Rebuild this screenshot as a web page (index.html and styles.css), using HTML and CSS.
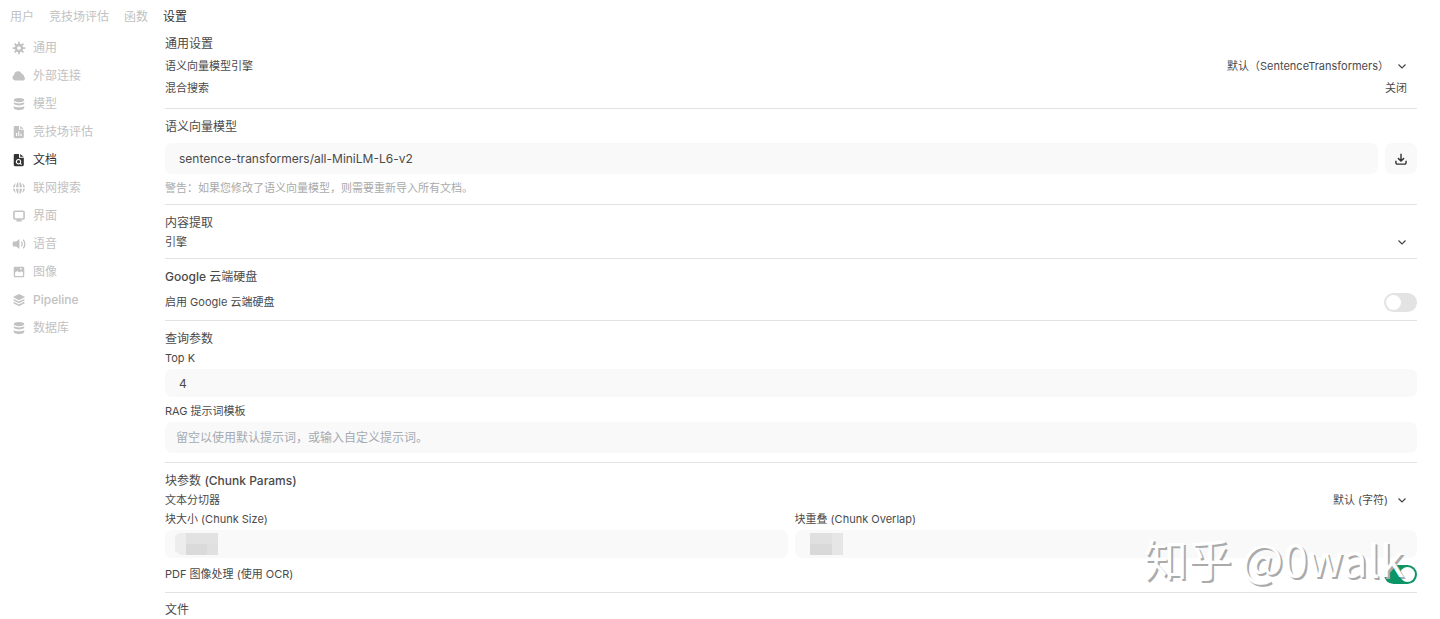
FILE: index.html
```html
<!DOCTYPE html>
<html lang="zh-CN">
<head>
<meta charset="utf-8">
<meta name="viewport" content="width=device-width, initial-scale=1">
<title>设置</title>
<link rel="stylesheet" href="styles.css">
</head>
<body>
<nav class="tabs" aria-label="管理">
  <a href="#users">用户</a>
  <a href="#evaluations">竞技场评估</a>
  <a href="#functions">函数</a>
  <a href="#settings" class="active">设置</a>
</nav>
<div class="layout">
  <nav class="sidebar" aria-label="设置分类">
    <a href="#general"><svg class="icon" viewBox="0 0 16 16"><circle cx="8" cy="8" r="3.5" fill="none" stroke="currentColor" stroke-width="2.8"/><path d="M8 .8v3M8 12.200v3M.8 8h3M12.200 8h3M2.900 2.900l2.200 2.200M10.900 10.900l2.200 2.200M2.900 13.100l2.200-2.200M10.900 5.100l2.200-2.200" stroke="currentColor" stroke-width="2"/></svg>通用</a>
    <a href="#connections"><svg class="icon" viewBox="0 0 16 16"><path d="M4 13.200a3.500 3.500 0 0 1-1.500-6.600 4.500 4.500 0 0 1 8.600-1.300 3.400 3.400 0 0 1 2.700 3.500 2.500 2.500 0 0 1-.6 4.400z"/></svg>外部连接</a>
    <a href="#models"><svg class="icon" viewBox="0 0 16 16"><path d="M8 1c3.300 0 6 1 6 2.500S11.300 6 8 6 2 5 2 3.500 4.700 1 8 1zM2 5.800C3.300 7 5.500 7.400 8 7.400s4.700-.4 6-1.600v1.400c0 1.500-2.700 2.500-6 2.500S2 8.700 2 7.200zM2 10.200c1.300 1.200 3.500 1.600 6 1.600s4.700-.4 6-1.600v2.200C14 14 11.300 15 8 15s-6-1-6-2.600z"/></svg>模型</a>
    <a href="#arena"><svg class="icon" viewBox="0 0 16 16"><path fill-rule="evenodd" d="M3.500 1H8v4.500h5.500v8A1.500 1.500 0 0 1 12 15H3.500A1.500 1.500 0 0 1 2 13.500v-11A1.500 1.500 0 0 1 3.500 1zM9.300 1.100l4 3.200H9.300zM4.500 9v3.500h1.300V9zm2.600-1.500v5h1.300v-5zm2.600 2.500v2.500H11V10z"/></svg>竞技场评估</a>
    <a href="#documents" class="active"><svg class="icon" viewBox="0 0 16 16"><path fill-rule="evenodd" d="M3.500 1H8v4.500h5.500v8A1.500 1.500 0 0 1 12 15H3.500A1.500 1.500 0 0 1 2 13.500v-11A1.500 1.500 0 0 1 3.500 1zM9.300 1.100l4 3.200H9.300zM7.500 6.800a3.100 3.100 0 1 0 1.600 5.700l1.300 1.200.9-.9-1.200-1.300a3.100 3.100 0 0 0-2.600-4.700zm0 1.300a1.800 1.800 0 1 1 0 3.600 1.800 1.800 0 0 1 0-3.600z"/></svg>文档</a>
    <a href="#web"><svg class="icon" viewBox="0 0 16 16"><path d="M7.300 1.200v6H4.700c.1-2.800 1-5 2.600-6zM8.700 1.200v6h2.600c-.1-2.800-1-5-2.600-6zM7.300 14.800v-6H4.700c.1 2.800 1 5 2.600 6zM8.700 14.800v-6h2.600c-.1 2.800-1 5-2.600 6zM4.500 2.200a8 8 0 0 0-1.100 5H1.100a7 7 0 0 1 3.400-5zM4.500 13.800a8 8 0 0 1-1.100-5H1.100a7 7 0 0 0 3.400 5zM11.500 2.200a8 8 0 0 1 1.100 5h2.300a7 7 0 0 0-3.400-5zM11.500 13.800a8 8 0 0 0 1.100-5h2.300a7 7 0 0 1-3.400 5z"/></svg>联网搜索</a>
    <a href="#interface"><svg class="icon" viewBox="0 0 16 16"><path d="M3.500 2.500h9a1.300 1.300 0 0 1 1.300 1.300v6.400a1.300 1.300 0 0 1-1.300 1.300h-9a1.300 1.300 0 0 1-1.300-1.300V3.800a1.300 1.300 0 0 1 1.300-1.300zM5 13.500h6M6.500 11.500v2M9.500 11.500v2" fill="none" stroke="currentColor" stroke-width="1.800"/></svg>界面</a>
    <a href="#audio"><svg class="icon" viewBox="0 0 16 16"><path d="M8.500 2.200v11.600L4.700 10.800H2A1.200 1.200 0 0 1 .8 9.600V6.400A1.200 1.200 0 0 1 2 5.200h2.700z"/><path d="M10.500 5.300a3.800 3.800 0 0 1 0 5.400M12.700 3.200a6.800 6.800 0 0 1 0 9.600" fill="none" stroke="currentColor" stroke-width="1.500"/></svg>语音</a>
    <a href="#images"><svg class="icon" viewBox="0 0 16 16"><path fill-rule="evenodd" d="M3.200 2h9.600A1.200 1.200 0 0 1 14 3.200v9.600a1.200 1.200 0 0 1-1.200 1.200H3.200A1.200 1.200 0 0 1 2 12.800V3.200A1.200 1.200 0 0 1 3.200 2zM3.500 8.500v4h9v-4l-2-1.300L8.500 8.500 6 6.800zM9.300 3.500v1.700H11V3.500z"/></svg>图像</a>
    <a href="#pipelines"><svg class="icon" viewBox="0 0 16 16"><path d="M8 1 15 4.700 8 8.400 1 4.700zM2.700 7 8 9.800 13.300 7 15 8 8 11.700 1 8zM2.700 10.300 8 13.100l5.300-2.800 1.700 1L8 15l-7-3.700z"/></svg><span class="medium">Pipeline</span></a>
    <a href="#database"><svg class="icon" viewBox="0 0 16 16"><path d="M8 1c3.300 0 6 1 6 2.500S11.300 6 8 6 2 5 2 3.500 4.700 1 8 1zM2 5.800C3.300 7 5.500 7.400 8 7.400s4.700-.4 6-1.600v1.400c0 1.500-2.700 2.500-6 2.500S2 8.700 2 7.200zM2 10.200c1.300 1.200 3.500 1.600 6 1.600s4.700-.4 6-1.600v2.200C14 14 11.300 15 8 15s-6-1-6-2.600z"/></svg>数据库</a>
  </nav>
  <main class="content">
    <section class="group first">
      <h2>通用设置</h2>
      <div class="row tall spaced">
        <label for="embed-engine">语义向量模型引擎</label>
        <span class="picker"><select id="embed-engine"><option>默认（SentenceTransformers）</option></select><svg class="chevron" viewBox="0 0 10 10"><path d="m1.500 3.500 3.500 3.500 3.500-3.500"/></svg></span>
      </div>
      <div class="row tall">
        <span id="hybrid">混合搜索</span>
        <button class="text-button" type="button" aria-describedby="hybrid">关闭</button>
      </div>
    </section>
    <section class="group compact">
      <h2><label for="embed-model">语义向量模型</label></h2>
      <div class="model-row">
        <input class="field large" id="embed-model" type="text" value="sentence-transformers/all-MiniLM-L6-v2">
        <button class="download" type="button" aria-label="下载"><svg viewBox="0 0 16 16"><path d="M8 2v8M4.500 7 8 10.300 11.500 7M2.200 10v2.300A1.500 1.500 0 0 0 3.700 13.800h8.600a1.500 1.500 0 0 0 1.500-1.500V10"/></svg></button>
      </div>
      <p class="note">警告：如果您修改了语义向量模型，则需要重新导入所有文档。</p>
    </section>
    <section class="group compact">
      <h2>内容提取</h2>
      <div class="row">
        <label for="extract-engine">引擎</label>
        <span class="picker"><select id="extract-engine"><option label=" "></option></select><svg class="chevron" viewBox="0 0 10 10"><path d="m1.500 3.500 3.500 3.500 3.500-3.500"/></svg></span>
      </div>
    </section>
    <section class="group compact">
      <h2><span class="medium">Google</span> 云端硬盘</h2>
      <div class="row tall after-heading">
        <label for="drive">启用 Google 云端硬盘</label>
        <input class="switch" id="drive" type="checkbox">
      </div>
    </section>
    <section class="group">
      <h2>查询参数</h2>
      <label class="caption" for="top-k">Top K</label>
      <input class="field" id="top-k" type="text" inputmode="numeric" value="4">
      <label class="caption next" for="rag">RAG 提示词模板</label>
      <textarea class="field large template" id="rag" rows="1" placeholder="留空以使用默认提示词，或输入自定义提示词。"></textarea>
    </section>
    <section class="group compact">
      <h2>块参数 <span class="medium">(Chunk Params)</span></h2>
      <div class="row">
        <label for="splitter">文本分切器</label>
        <span class="picker"><select id="splitter"><option>默认 (字符)</option></select><svg class="chevron" viewBox="0 0 10 10"><path d="m1.500 3.500 3.500 3.500 3.500-3.500"/></svg></span>
      </div>
      <div class="columns">
        <div>
          <label class="caption" for="chunk-size">块大小 (Chunk Size)</label>
          <div class="masked"><input class="field" id="chunk-size" type="text"><svg class="mosaic" viewBox="0 0 43 22"><path fill="#ededed" d="M4 0h7v22H6L0 18V3z"/><path fill="#e2e2e2" d="M11 0h32v11H11z"/><path fill="#dadada" d="M11 11h21v11H11z"/><path fill="#e0e0e0" d="M32 11h11v11H32z"/></svg></div>
        </div>
        <div>
          <label class="caption" for="chunk-overlap">块重叠 (Chunk Overlap)</label>
          <div class="masked overlap"><input class="field" id="chunk-overlap" type="text"><svg class="mosaic" viewBox="0 0 43 22"><path fill="#e0e0e0" d="M0 0h22v11H0z"/><path fill="#d9d9d9" d="M0 11h22v11H0z"/><path fill="#e6e6e6" d="M22 0h11v22H22z"/></svg></div>
        </div>
      </div>
      <div class="row tall ocr">
        <label for="ocr">PDF 图像处理 (使用 OCR)</label>
        <input class="switch" id="ocr" type="checkbox" checked>
      </div>
    </section>
    <section class="group last">
      <h2>文件</h2>
    </section>
  </main>
</div>
<div class="watermark">知乎 @0walk</div>
</body>
</html>
```

FILE: styles.css
```css
* { box-sizing: border-box; }

body {
  position: relative;
  margin: 0;
  background: #fff;
  color: #4a4a4a;
  font-family: Inter, "Noto Sans CJK SC", sans-serif;
  font-size: 11px;
  line-height: 18px;
}

a { color: inherit; text-decoration: none; }
h2, p { margin: 0; }

input, select, textarea, button {
  margin: 0;
  border: 0;
  color: inherit;
  font: inherit;
}

.tabs {
  display: flex;
  gap: 15px;
  padding: 8px 10px 9px;
  color: #c2c2c2;
  font-size: 12px;
}

.tabs .active, .sidebar .active { color: #333; }

.layout { display: flex; }

.sidebar {
  display: flex;
  flex: 0 0 165px;
  flex-direction: column;
  gap: 10px;
  padding: 4px 12px;
  color: #c2c2c2;
  font-size: 12px;
}

.sidebar a {
  display: flex;
  align-items: center;
  gap: 7px;
}

.medium { font-weight: 500; }

.icon { width: 14px; height: 14px; fill: currentColor; }

.content { flex: 1; min-width: 0; padding-right: 23px; }

.group { padding: 9px 0; border-bottom: 1px solid #e2e2e2; }
.first { padding: 0 0 9px; }
.compact { padding-bottom: 7px; }
.last { padding: 8px 0 0; border: 0; }

h2 {
  font-size: 12px;
  font-weight: 400;
  line-height: 18px;
}

.row {
  display: flex;
  align-items: center;
  justify-content: space-between;
  min-height: 18px;
  margin-top: 1px;
}

.tall { min-height: 22px; margin-top: 0; }
.spaced { margin-top: 2px; }
.after-heading { margin-top: 5px; }

.picker { position: relative; display: flex; }

.picker select {
  appearance: none;
  padding: 0 28px 0 8px;
  background: transparent;
  line-height: 18px;
}

.chevron {
  position: absolute;
  top: 4px;
  right: 10px;
  width: 10px;
  height: 10px;
  fill: none;
  stroke: #444;
  stroke-width: 1.2;
  pointer-events: none;
}

.text-button { padding: 0 10px; background: transparent; }

.field {
  display: block;
  width: 100%;
  height: 28px;
  padding: 0 14px;
  border-radius: 7px;
  background: #f9f9f9;
  font-size: 12px;
}

.large { height: 31px; }

.template { padding: 7px 11px; resize: none; overflow: hidden; }
.template::placeholder { color: #a5abb3; }

.model-row { display: flex; gap: 7px; margin-top: 7px; }

.download {
  display: grid;
  flex: 0 0 32px;
  place-items: center;
  padding: 0;
  border-radius: 7px;
  background: #f9f9f9;
}

.download svg {
  width: 14px;
  height: 14px;
  fill: none;
  stroke: #333;
  stroke-width: 1.6;
}

.note { margin-top: 5px; color: #aaa; }

.caption { display: block; margin: 1px 0 2px; }
.next { margin-top: 5px; }

.columns { display: grid; grid-template-columns: 1fr 1fr; gap: 7px; }

.masked { position: relative; }
.mosaic { position: absolute; top: 3px; left: 10px; width: 43px; height: 22px; }
.overlap .mosaic { left: 15px; }

.ocr { margin-top: 5px; }

.switch {
  display: flex;
  align-items: center;
  appearance: none;
  width: 33px;
  height: 19px;
  padding: 2px;
  border-radius: 10px;
  background: #e3e3e3;
}

.switch::before {
  width: 15px;
  height: 15px;
  border-radius: 50%;
  background: #fff;
  content: "";
}

.switch:checked { justify-content: flex-end; background: #0b9567; }

.watermark {
  position: absolute;
  right: 36px;
  bottom: 31px;
  color: #fff;
  font-family: "Noto Sans CJK SC", sans-serif;
  font-size: 44px;
  font-weight: 400;
  line-height: 60px;
  text-shadow: 2px 2px 0 #aaa;
  pointer-events: none;
}
```
